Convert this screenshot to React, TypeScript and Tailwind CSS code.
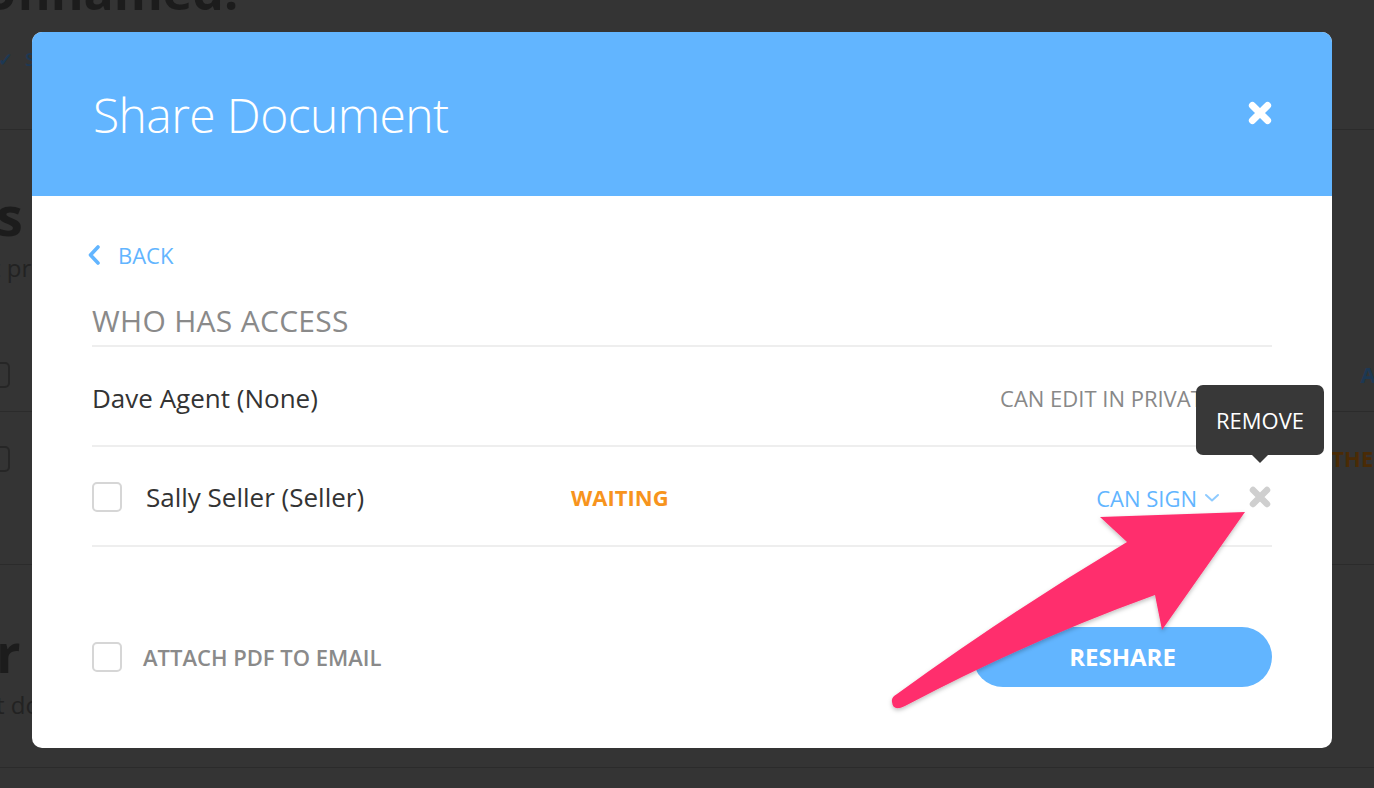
import React from "react";

function CloseIcon({ className }: { className?: string }) {
  return (
    <svg viewBox="0 0 24 24" className={className} fill="none">
      <path d="M5 5 L19 19 M19 5 L5 19" stroke="currentColor" strokeWidth="6.5" strokeLinecap="round" />
    </svg>
  );
}

function Chevron({ color }: { color: string }) {
  return (
    <svg viewBox="0 0 16 10" className="w-[16px] h-[10px] mt-[1px]" fill="none">
      <path d="M2 2 L8 7.5 L14 2" stroke={color} strokeWidth="2" strokeLinecap="round" strokeLinejoin="round" />
    </svg>
  );
}

function Checkbox() {
  return <span className="block w-[30px] h-[30px] shrink-0 rounded-[5px] border-2 border-[#d6d6d6] bg-white" />;
}

function BackgroundPage() {
  return (
    <div className="flex flex-col w-full h-full bg-[#343434] text-[#1c1c1c]">
      <div className="h-[130px] border-b border-[#2b2b2b]">
        <div className="-mt-[34px] -ml-[20px] text-[50px] font-bold leading-none">Unnamed.</div>
        <div className="mt-[30px] flex items-center gap-3 text-[18px] font-semibold text-[#1d3853]">
          <span className="-ml-[2px]">✓</span>
          <span>Saved</span>
        </div>
      </div>
      <div className="h-[282px] border-b border-[#2b2b2b]">
        <div className="mt-[58px] -ml-[4px] text-[54px] font-bold leading-none">s</div>
        <div className="mt-[8px] -ml-[8px] text-[24px] text-[#222]">t preview</div>
        <div className="mt-[72px] flex items-center justify-between">
          <span className="-ml-[18px] block w-[28px] h-[26px] rounded-[5px] border-2 border-[#262626]" />
          <span className="mr-[-14px] text-[22px] font-bold text-[#1d3853]">AL</span>
        </div>
      </div>
      <div className="h-[153px] border-b border-[#2b2b2b]">
        <div className="mt-[30px] flex items-center justify-between">
          <span className="-ml-[18px] block w-[28px] h-[26px] rounded-[5px] border-2 border-[#262626]" />
          <span className="mr-[-20px] text-[22px] font-bold text-[#4a2b05]">THEM</span>
        </div>
      </div>
      <div className="h-[203px] border-b border-[#2b2b2b]">
        <div className="mt-[60px] -ml-[4px] text-[54px] font-bold leading-none">r t</div>
        <div className="mt-[8px] -ml-[4px] text-[24px] text-[#222]">t docs</div>
      </div>
    </div>
  );
}

export default function App() {
  return (
    <div className="relative w-full h-[788px] overflow-hidden" style={{ fontFamily: '"Open Sans", "Noto Sans", sans-serif' }}>
      <BackgroundPage />

      {/* modal */}
      <div className="absolute inset-0 pl-[32px] pt-[32px]">
        <div className="w-[1300px] h-[716px] bg-white rounded-[10px] overflow-hidden">
          <div className="h-[164px] bg-[#62b5ff] flex items-center justify-between pl-[61px] pr-[60px]">
            <h1 className="text-white text-[48px] font-light tracking-[-0.6px] leading-none pt-[2px]">Share Document</h1>
            <CloseIcon className="w-[26px] h-[26px] text-white -mr-[1px] -mt-[2px]" />
          </div>

          <div className="px-[60px] pt-[44px]">
            <div className="flex items-center text-[#62b5ff] text-[22px] h-[30px]">
              <svg viewBox="0 0 14 22" className="w-[14px] h-[22px] -ml-[5px]" fill="none">
                <path d="M11 3 L3.5 11 L11 19" stroke="currentColor" strokeWidth="3.6" strokeLinecap="round" strokeLinejoin="round" />
              </svg>
              <span className="ml-[17px]">BACK</span>
            </div>

            <div className="mt-[31px] pb-[4px] border-b-2 border-[#eeeeee] text-[30px] leading-[40px] tracking-[0.3px] text-[#8a8a8a]">
              WHO HAS ACCESS
            </div>

            <div className="h-[100px] pt-[2px] flex items-center justify-between border-b-2 border-[#eeeeee]">
              <span className="text-[26px] text-[#333] pt-[2px]">Dave Agent (None)</span>
              <div className="flex items-center pr-[34px]">
                <span className="text-[22px] text-[#888] pt-[2px]">CAN EDIT IN PRIVATE</span>
                <span className="ml-[7px]">
                  <Chevron color="#bbbbbb" />
                </span>
              </div>
            </div>

            <div className="h-[100px] pt-[2px] flex items-center border-b-2 border-[#eeeeee]">
              <Checkbox />
              <span className="ml-[24px] w-[425px] text-[26px] text-[#333]">Sally Seller (Seller)</span>
              <span className="text-[22px] font-bold text-[#f7941d]">WAITING</span>
              <div className="ml-auto flex items-center">
                <span className="text-[22px] text-[#62b5ff] pt-[3px]">CAN SIGN</span>
                <span className="ml-[7px]">
                  <Chevron color="#8fcbff" />
                </span>
                <div className="relative ml-[28px] w-[24px] h-[24px]">
                  <CloseIcon className="w-[24px] h-[24px] text-[#cfcfcf]" />
                  <div className="absolute bottom-[54px] left-1/2 -translate-x-1/2 w-[128px] h-[70px] rounded-[7px] bg-[#383838] flex items-center justify-center">
                    <span className="text-white text-[22px]">REMOVE</span>
                    <span className="absolute -bottom-[8px] left-1/2 -translate-x-1/2 w-0 h-0 border-l-[9px] border-r-[9px] border-t-[9px] border-l-transparent border-r-transparent border-t-[#383838]" />
                  </div>
                </div>
              </div>
            </div>

            <div className="mt-[80px] h-[60px] flex items-center">
              <Checkbox />
              <span className="ml-[21px] text-[22px] font-semibold text-[#8a8a8a]">ATTACH PDF TO EMAIL</span>
              <button className="ml-auto w-[299px] h-[60px] rounded-full bg-[#62b5ff] text-white text-[24px] font-bold">
                RESHARE
              </button>
            </div>
          </div>
        </div>
      </div>

      {/* annotation arrow */}
      <svg className="absolute inset-0 pointer-events-none" width="1374" height="788" viewBox="0 0 1374 788">
        <defs>
          <filter id="sh" x="-10%" y="-10%" width="120%" height="120%">
            <feDropShadow dx="0" dy="2" stdDeviation="2" floodColor="#000" floodOpacity="0.25" />
          </filter>
        </defs>
        <path
          d="M897 694 Q1010 612 1127 542 L1100 517 L1245 512 L1162 630 L1155 595 Q1030 640 905 706 Q893 712 892 702 Q891 697 897 694 Z"
          fill="#ff2f6d"
          filter="url(#sh)"
        />
      </svg>
    </div>
  );
}
